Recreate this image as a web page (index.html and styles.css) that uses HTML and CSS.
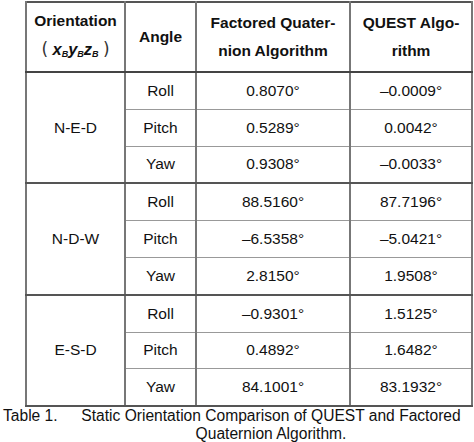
FILE: index.html
```html
<!DOCTYPE html>
<html lang="en">
<head>
<meta charset="UTF-8" />
<title>Static Orientation Comparison</title>
<link rel="stylesheet" href="styles.css">
</head>
<body>

<table class="results">
  <colgroup>
    <col class="c-orient">
    <col class="c-angle">
    <col class="c-factored">
    <col class="c-quest">
  </colgroup>
  <thead>
    <tr>
      <th>Orientation<br>
        <span class="axes"><span class="paren">(</span> <i>x</i><sub>B</sub><i>y</i><sub>B</sub><i>z</i><sub>B</sub> <span class="paren">)</span></span>
      </th>
      <th>Angle</th>
      <th>Factored Quater-<br>nion Algorithm</th>
      <th>QUEST Algo-<br>rithm</th>
    </tr>
  </thead>
  <tbody>
    <tr><td rowspan="3">N-E-D</td><td>Roll</td><td>0.8070°</td><td>–0.0009°</td></tr>
    <tr><td>Pitch</td><td>0.5289°</td><td>0.0042°</td></tr>
    <tr class="last"><td>Yaw</td><td>0.9308°</td><td>–0.0033°</td></tr>
  </tbody>
  <tbody>
    <tr><td rowspan="3">N-D-W</td><td>Roll</td><td>88.5160°</td><td>87.7196°</td></tr>
    <tr><td>Pitch</td><td>–6.5358°</td><td>–5.0421°</td></tr>
    <tr class="last"><td>Yaw</td><td>2.8150°</td><td>1.9508°</td></tr>
  </tbody>
  <tbody>
    <tr><td rowspan="3">E-S-D</td><td>Roll</td><td>–0.9301°</td><td>1.5125°</td></tr>
    <tr><td>Pitch</td><td>0.4892°</td><td>1.6482°</td></tr>
    <tr class="last"><td>Yaw</td><td>84.1001°</td><td>83.1932°</td></tr>
  </tbody>
</table>

<div class="caption">
  <span class="label">Table 1.</span>
  <span class="text">Static Orientation Comparison of QUEST and Factored Quaternion Algorithm.</span>
</div>

</body>
</html>
```

FILE: styles.css
```css
body {
  margin: 0;
  background: #fff;
  color: #111;
  font-family: 'Liberation Sans', Arial, sans-serif;
}
.results {
  border-collapse: collapse;
  margin-left: 25px;
  margin-top: 1px;
  width: 446px;
  table-layout: fixed;
  border: 2px solid #555;
  font-size: 15.5px;
}
.c-orient { width: 99px; }
.c-angle { width: 71px; }
.c-factored { width: 154px; }
.c-quest { width: 122px; }
.results th,
.results td {
  text-align: center;
  vertical-align: middle;
  padding: 0;
  border-left: 2px solid #777;
  border-right: 2px solid #777;
}
.results th {
  height: 68px;
  line-height: 28px;
  font-weight: bold;
  border-bottom: 2px solid #444;
}
.results td {
  height: 35.8px;
  border-bottom: 1px solid #999;
}
.results td[rowspan],
.results tr.last td {
  border-bottom: 2px solid #555;
}
.axes {
  font-weight: bold;
  white-space: nowrap;
}
.axes i {
  font-style: italic;
  font-size: 16.5px;
}
.axes sub {
  font-style: italic;
  font-size: 9px;
  vertical-align: -2px;
}
.paren {
  font-family: 'DejaVu Sans', sans-serif;
  font-weight: normal;
  font-size: 17px;
  color: #333;
}
.caption {
  display: flex;
  font-size: 15.6px;
  line-height: 18px;
  padding-left: 3px;
}
.caption .label {
  flex: 0 0 75px;
}
.caption .text {
  width: 386px;
  text-align: center;
}
```
